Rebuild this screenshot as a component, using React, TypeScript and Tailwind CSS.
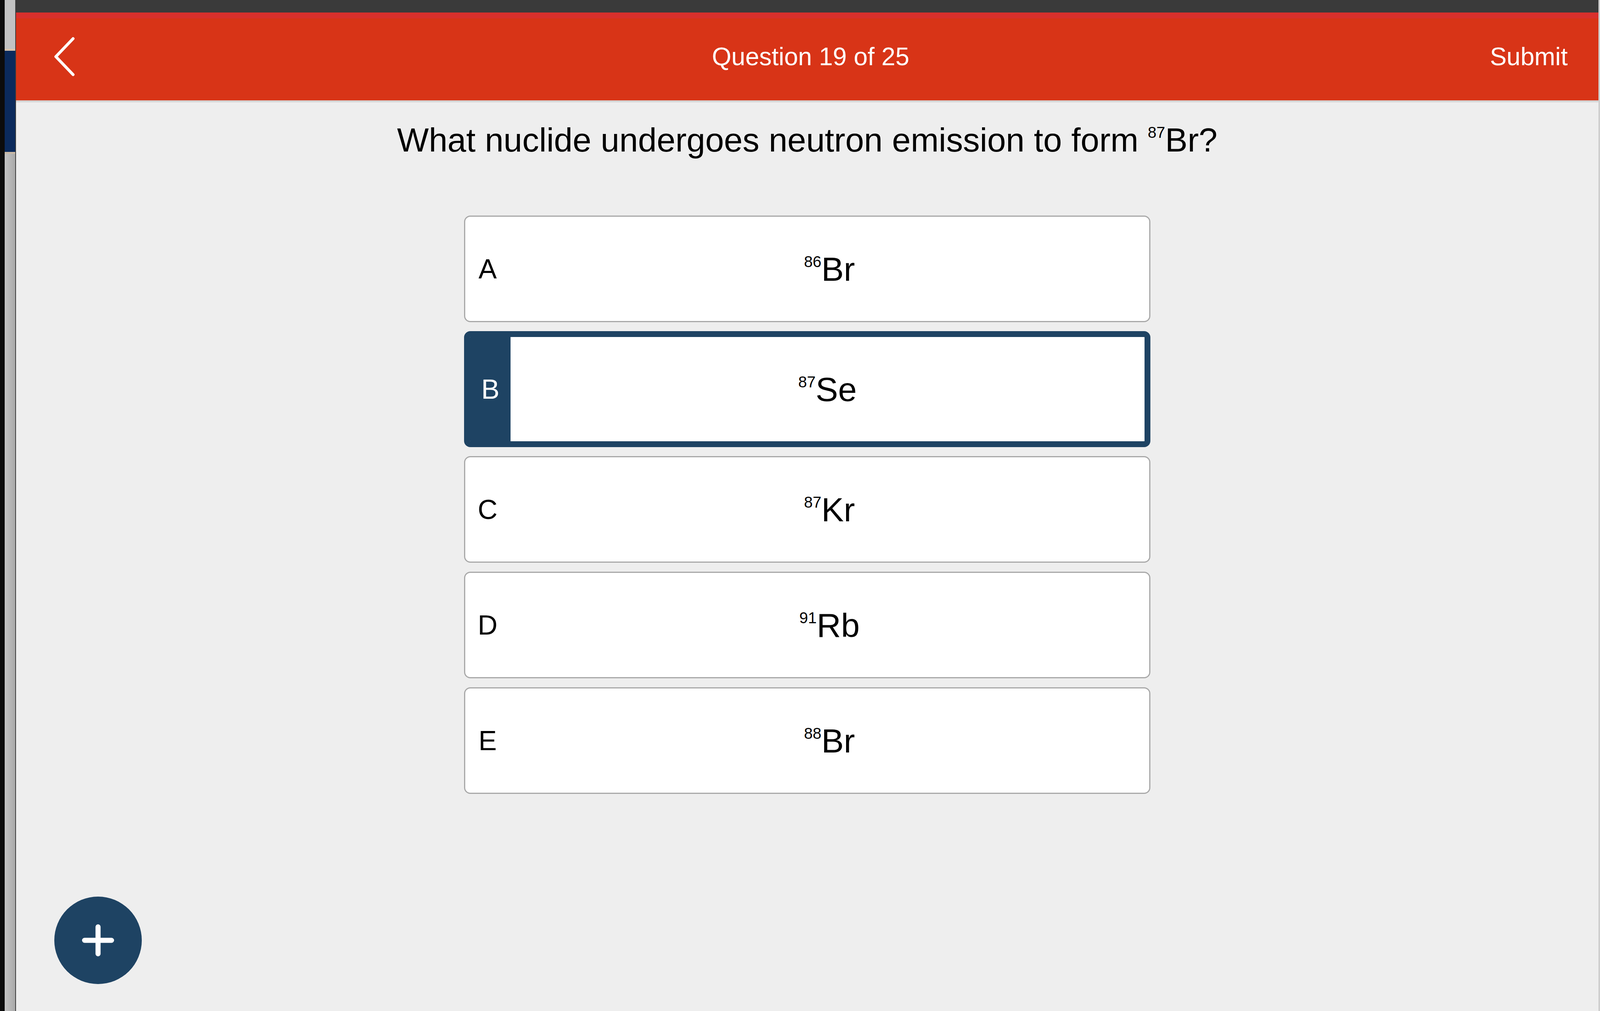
import clsx from 'clsx'

// Question screen: red app bar, prompt, five answer cards, floating add button.

const options = [
  { letter: 'A', mass: '86', symbol: 'Br' },
  { letter: 'B', mass: '87', symbol: 'Se' },
  { letter: 'C', mass: '87', symbol: 'Kr' },
  { letter: 'D', mass: '91', symbol: 'Rb' },
  { letter: 'E', mass: '88', symbol: 'Br' },
]

const selected = 'B'

function Nuclide({ mass, symbol }: { mass: string; symbol: string }) {
  return (
    <span className="whitespace-nowrap">
      <span className="align-[35px] text-[40px] leading-none">{mass}</span>
      {symbol}
    </span>
  )
}

function BackChevron() {
  return (
    <svg width="58" height="104" viewBox="0 0 58 104" fill="none">
      <polyline
        points="50,6 6,52 50,98"
        stroke="white"
        strokeWidth="7.5"
        strokeLinecap="round"
        strokeLinejoin="round"
      />
    </svg>
  )
}

function AnswerCard({
  letter,
  mass,
  symbol,
  active,
}: {
  letter: string
  mass: string
  symbol: string
  active: boolean
}) {
  return (
    <div
      className={clsx(
        'flex w-full overflow-hidden rounded-[16px] bg-white',
        active
          ? 'h-[297px] border-[15px] border-[#1e4363]'
          : 'h-[273px] border-[3px] border-[#a8a8a8]',
      )}
    >
      <div
        className={clsx(
          'flex shrink-0 items-center justify-center text-[70px] leading-none',
          active ? 'w-[6%] bg-[#1e4363] text-white' : 'w-[6.5%] text-black',
        )}
      >
        {letter}
      </div>
      <div className="flex flex-1 items-center justify-center text-[86px] leading-none text-black">
        <Nuclide mass={mass} symbol={symbol} />
      </div>
    </div>
  )
}

export default function App() {
  return (
    <div className="flex h-screen w-full overflow-hidden bg-[#eeeeee] font-['Liberation_Sans',Arial,sans-serif]">
      {/* neighbouring window edge */}
      <div className="flex w-[1.01%] shrink-0">
        <div className="w-[29%] bg-[#0c0c0c]" />
        <div className="flex w-[65%] flex-col">
          <div className="h-[125px] bg-[#c2c2c2]" />
          <div className="h-[5px] bg-[#d9c4ad]" />
          <div className="h-[259px] bg-[#0b2a5c]" />
          <div className="h-[5px] bg-[#c9b9a6]" />
          <div className="flex-1 bg-gradient-to-r from-[#c4c4c4] to-[#a9a9a9]" />
        </div>
        <div className="w-[6%] bg-[#3c3c3c]" />
      </div>

      <div className="flex min-w-0 flex-1 flex-col">
        <div className="h-[32px] shrink-0 bg-[#3a3a3a]" />

        <header className="grid h-[230px] shrink-0 grid-cols-[1fr_auto_1fr] items-center border-b-[5px] border-[#d6d6d6] bg-[#d83417] pl-[2.36%] pr-[1.94%] text-[64px] leading-none text-white shadow-[inset_0_15px_0_#d9302c]">
          <button className="flex items-center justify-self-start">
            <BackChevron />
          </button>
          <h1 className="font-normal">Question 19 of 25</h1>
          <button className="justify-self-end">Submit</button>
        </header>

        <main className="flex flex-col items-center pt-[53px]">
          <p className="whitespace-nowrap text-[86px] leading-none text-black">
            What nuclide undergoes neutron emission to form <Nuclide mass="87" symbol="Br?" />
          </p>

          <div className="mt-[151px] flex w-[43.36%] flex-col gap-[23px]">
            {options.map((o) => (
              <AnswerCard
                key={o.letter}
                letter={o.letter}
                mass={o.mass}
                symbol={o.symbol}
                active={o.letter === selected}
              />
            ))}
          </div>
        </main>
      </div>

      <div className="w-[0.1%] shrink-0 bg-[#cfcfcf]" />

      <button className="fixed bottom-[69px] left-[3.39%] flex h-[224px] w-[224px] items-center justify-center rounded-full bg-[#1e4363]">
        <svg width="82" height="82" viewBox="0 0 82 82" fill="none">
          <path d="M41 6.5v69M6.5 41h69" stroke="white" strokeWidth="13" strokeLinecap="round" />
        </svg>
      </button>
    </div>
  )
}
